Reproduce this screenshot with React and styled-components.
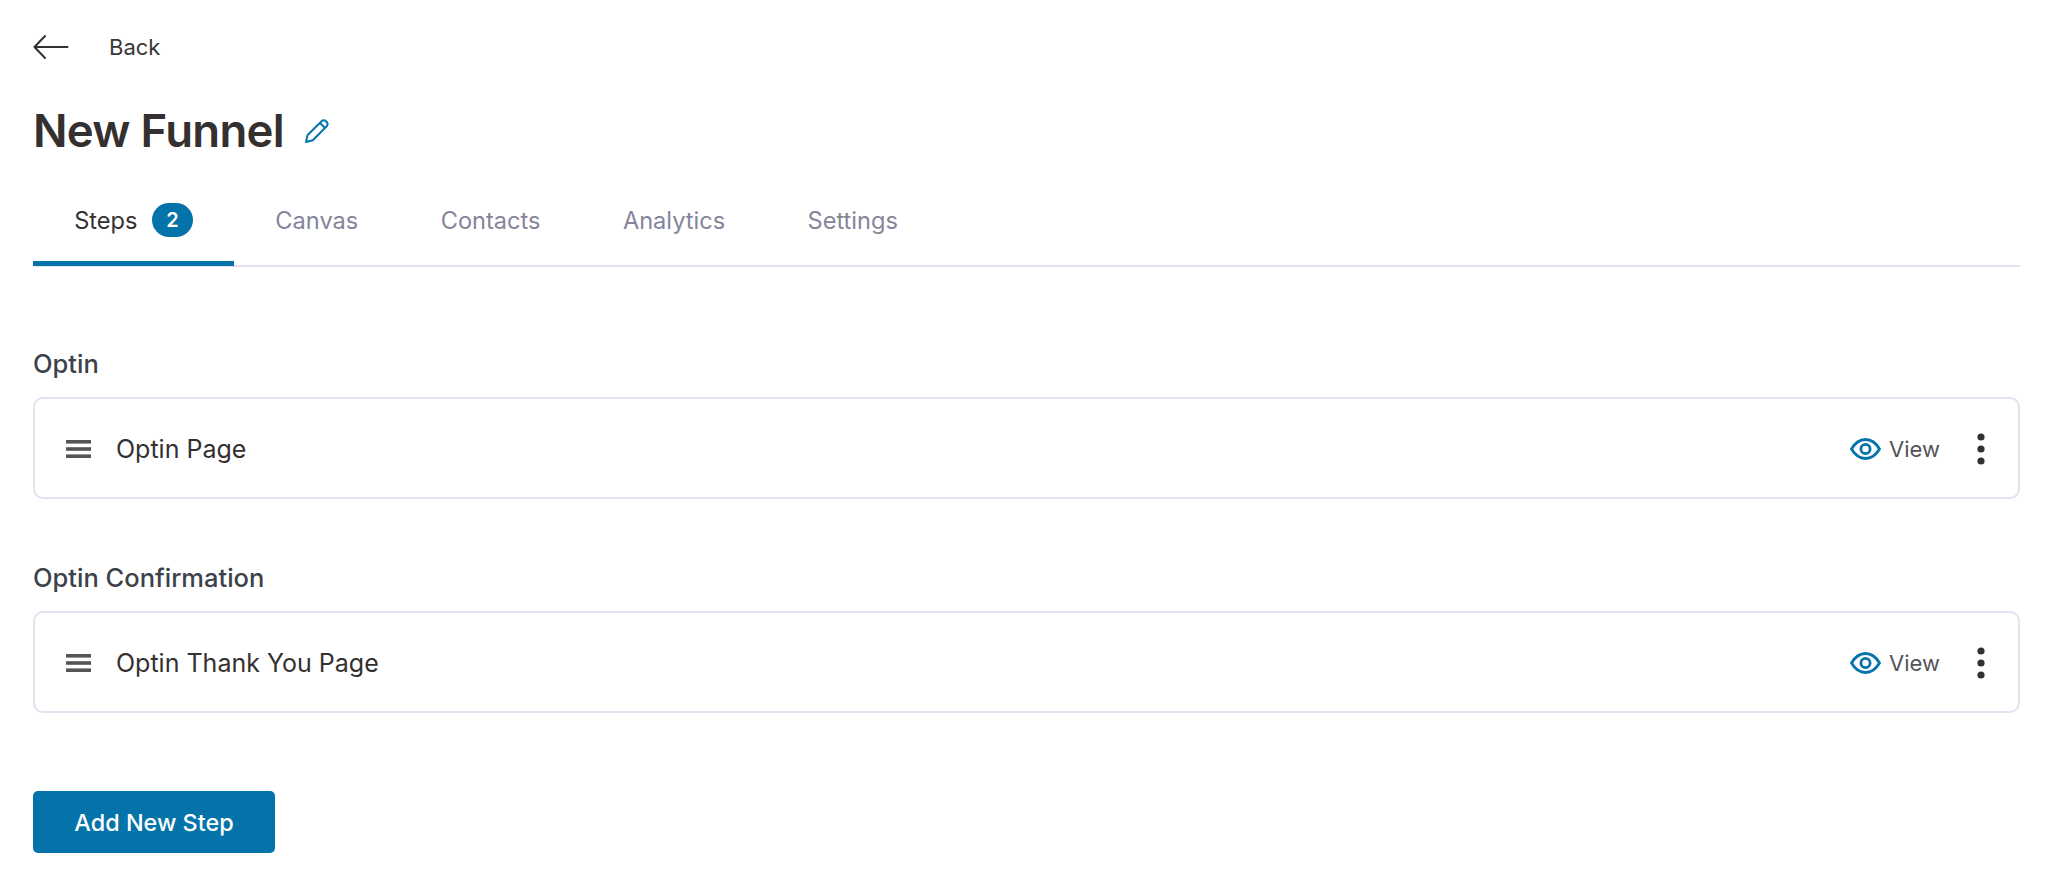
import React from 'react';
import styled, { createGlobalStyle } from 'styled-components';

const Global = createGlobalStyle`
  html, body { margin: 0; padding: 0; background: #fff; }
  body { font-family: Inter, "Liberation Sans", sans-serif; color: #353030; }
`;
const Page = styled.div`
  width: 2048px; height: 891px; box-sizing: border-box; padding: 0 28px 0 33px; overflow: hidden;
`;
const BackRow = styled.div`
  display: flex; align-items: center; height: 46px; margin-top: 24px; gap: 40px;
  font-size: 22px; color: #3a3636;
`;
const TitleRow = styled.div`
  display: flex; align-items: center; gap: 20px; margin-top: 26px; height: 70px;
`;
const Title = styled.h1`
  margin: 0; font-size: 45.5px; font-weight: 600; letter-spacing: -0.7px; color: #353030; line-height: 68px;
`;
const Tabs = styled.div`
  display: flex; height: 80px; margin-top: 19px; border-bottom: 2px solid #e2e2ee; box-sizing: content-box;
`;
const Tab = styled.div`
  display: flex; align-items: center; gap: 14.5px; padding: 0 41.2px 6px; margin-bottom: -1px;
  font-size: 23.6px; color: ${p => (p.$active ? '#353030' : '#85859a')};
  border-bottom: 5px solid ${p => (p.$active ? '#0473aa' : 'transparent')};
`;
const Badge = styled.span`
  display: inline-flex; align-items: center; justify-content: center;
  width: 41px; height: 34px; border-radius: 17px; background: #0473aa; color: #fff;
  font-size: 20px; font-weight: 600;
`;
const Group = styled.section`
  margin-top: ${p => p.$top}px;
`;
const GroupLabel = styled.div`
  font-size: 25.5px; font-weight: 500; color: #3b424a; line-height: 30px; margin-bottom: 18px;
`;
const Card = styled.div`
  display: flex; align-items: center; height: 102px; box-sizing: border-box;
  border: 2px solid #e2e2f0; border-radius: 10px; padding: 2px 33px 0 31px;
`;
const StepName = styled.span`
  font-size: 25px; color: #353030; margin-left: 25px; flex: 1;
`;
const ViewLink = styled.span`
  display: flex; align-items: center; gap: 8px; font-size: 22px; color: #53535a; margin-right: 37px;
`;
const AddButton = styled.button`
  display: block; margin-top: 78px; width: 242px; height: 62px; border: 0; border-radius: 5px;
  background: #0473aa; color: #fff; font: 500 23.4px Inter, "Liberation Sans", sans-serif;
`;

const BackIcon = () => (
  <svg width="36" height="26" viewBox="0 0 36 26" fill="none" stroke="#353030" strokeWidth="2" strokeLinecap="round" strokeLinejoin="round">
    <path d="M34.5 13H1.5M12 2 1.5 13 12 24" />
  </svg>
);
const PencilIcon = () => (
  <svg width="26" height="26" viewBox="0 0 26 26" fill="none" stroke="#0473aa" strokeWidth="2" strokeLinejoin="round">
    <path d="M2 24l1.6-7L17.6 3.2a3 3 0 0 1 4.3 0l.8.8a3 3 0 0 1 0 4.3L8.8 22.3 2 24z" />
    <path d="M16 5l5 5" />
  </svg>
);
const DragIcon = () => (
  <svg width="25" height="18" viewBox="0 0 25 18" fill="#555">
    <rect y="0" width="25" height="3.6" />
    <rect y="7.2" width="25" height="3.6" />
    <rect y="14.4" width="25" height="3.6" />
  </svg>
);
const EyeIcon = () => (
  <svg width="31" height="24" viewBox="0 0 31 24" fill="none" stroke="#0473aa" strokeWidth="2.8">
    <path d="M1.5 12C5 6 10 2.5 15.5 2.5S26 6 29.5 12C26 18 21 21.5 15.5 21.5S5 18 1.5 12z" />
    <circle cx="15.5" cy="12" r="4.6" />
  </svg>
);
const MoreIcon = () => (
  <svg width="8" height="32" viewBox="0 0 8 32" fill="#353030">
    <circle cx="4" cy="4" r="3.6" />
    <circle cx="4" cy="16" r="3.6" />
    <circle cx="4" cy="28" r="3.6" />
  </svg>
);

const steps = [
  { label: 'Optin', name: 'Optin Page', top: 82 },
  { label: 'Optin Confirmation', name: 'Optin Thank You Page', top: 64 },
];

export default function App() {
  return (
    <Page>
      <Global />
      <BackRow><BackIcon /><span>Back</span></BackRow>
      <TitleRow><Title>New Funnel</Title><PencilIcon /></TitleRow>
      <Tabs>
        <Tab $active>Steps <Badge>2</Badge></Tab>
        <Tab>Canvas</Tab>
        <Tab>Contacts</Tab>
        <Tab>Analytics</Tab>
        <Tab>Settings</Tab>
      </Tabs>
      {steps.map(s => (
        <Group key={s.name} $top={s.top}>
          <GroupLabel>{s.label}</GroupLabel>
          <Card>
            <DragIcon />
            <StepName>{s.name}</StepName>
            <ViewLink><EyeIcon />View</ViewLink>
            <MoreIcon />
          </Card>
        </Group>
      ))}
      <AddButton>Add New Step</AddButton>
    </Page>
  );
}
